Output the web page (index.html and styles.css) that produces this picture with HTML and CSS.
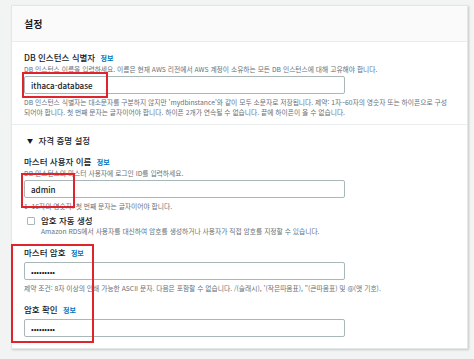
FILE: index.html
```html
<!DOCTYPE html>
<html lang="ko">
<head>
    <meta charset="UTF-8">
    <meta name="viewport" content="width=device-width, initial-scale=1.0">
    <title>설정</title>
    <link rel="stylesheet" href="styles.css">
</head>
<body>
    <div class="panel">
        <div class="panel-header">
            <h2>설정</h2>
        </div>

        <div class="section">
            <div class="field">
                <div class="label">DB 인스턴스 식별자 <a class="info">정보</a></div>
                <div class="desc">DB 인스턴스 이름을 입력하세요. 이름은 현재 AWS 리전에서 AWS 계정이 소유하는 모든 DB 인스턴스에 대해 고유해야 합니다.</div>
                <input class="text-input" type="text" value="ithaca-database" readonly>
                <div class="hint">DB 인스턴스 식별자는 대소문자를 구분하지 않지만 'mydbinstance'와 같이 모두 소문자로 저장됩니다. 제약: 1자~60자의 영숫자 또는 하이픈으로 구성<br>되어야 합니다. 첫 번째 문자는 글자이어야 합니다. 하이픈 2개가 연속될 수 없습니다. 끝에 하이픈이 올 수 없습니다.</div>
            </div>
        </div>

        <div class="section section-creds">
            <div class="expander"><span class="caret">▼</span> 자격 증명 설정</div>

            <div class="field">
                <div class="label">마스터 사용자 이름 <a class="info">정보</a></div>
                <div class="desc">DB 인스턴스의 마스터 사용자에 로그인 ID를 입력하세요.</div>
                <input class="text-input" type="text" value="admin" readonly>
                <div class="hint">1~16자의 영숫자. 첫 번째 문자는 글자이어야 합니다.</div>
            </div>

            <div class="check-row">
                <span class="checkbox"></span>
                <div>
                    <div class="check-label">암호 자동 생성</div>
                    <div class="desc">Amazon RDS에서 사용자를 대신하여 암호를 생성하거나 사용자가 직접 암호를 지정할 수 있습니다.</div>
                </div>
            </div>

            <div class="field field-pass">
                <div class="label">마스터 암호 <a class="info">정보</a></div>
                <input class="text-input pass" type="text" value="•••••••••" readonly>
                <div class="hint">제약 조건: 8자 이상의 인쇄 가능한 ASCII 문자. 다음은 포함할 수 없습니다. /(슬래시), '(작은따옴표), "(큰따옴표) 및 @(앳 기호).</div>
            </div>

            <div class="field field-confirm">
                <div class="label">암호 확인 <a class="info">정보</a></div>
                <input class="text-input pass" type="text" value="•••••••••" readonly>
            </div>
        </div>
    </div>

    <!-- annotation boxes drawn over the screenshot -->
    <div class="mark mark-id"></div>
    <div class="mark mark-user"></div>
    <div class="mark mark-pass"></div>
</body>
</html>
```

FILE: styles.css
```css
* {
    margin: 0;
    padding: 0;
    box-sizing: border-box;
}

body {
    position: relative;
    width: 474px;
    height: 359px;
    overflow: hidden;
    background: #f2f3f3;
    font-family: "Noto Sans CJK KR", "Noto Sans", sans-serif;
    color: #16191f;
    padding: 5px 6px 0 11px;
}

.panel {
    width: 457px;
    height: 344px;
    background: #ffffff;
    border: 1px solid #e4e7e7;
    box-shadow: 1px 1px 2px rgba(0, 0, 0, 0.18);
}

.panel-header {
    height: 36px;
    background: #fafafa;
    border-bottom: 1px solid #eaeded;
    padding: 0 12px;
    display: flex;
    align-items: center;
}

.panel-header h2 {
    font-size: 10px;
    font-weight: 700;
}

.section {
    padding: 9px 12px 7px;
}

.section-creds {
    border-top: 1px solid #eaeded;
    padding-top: 8px;
}

.label {
    font-size: 8.5px;
    font-weight: 500;
    line-height: 12px;
}

.info {
    color: #0073bb;
    font-size: 7px;
    font-weight: 700;
    margin-left: 3px;
}

.desc,
.hint {
    font-size: 6.75px;
    line-height: 10px;
    color: #687078;
    white-space: nowrap;
}

.text-input {
    display: block;
    width: 321px;
    height: 18px;
    margin-top: 2px;
    border: 1px solid #aab7b8;
    border-radius: 2px;
    padding: 0 6px;
    font-family: inherit;
    font-size: 8px;
    font-weight: 500;
    color: #16191f;
    background: #ffffff;
    outline: none;
}

.text-input.pass {
    font-size: 7.5px;
    letter-spacing: 0;
    margin-top: 3px;
}

.hint {
    margin-top: 3px;
}

.expander {
    font-size: 8.5px;
    font-weight: 500;
    line-height: 14px;
    color: #16191f;
}

.caret {
    font-size: 6px;
    margin: 0 3px 0 3px;
    vertical-align: 1px;
}

.section-creds .field {
    margin-top: 7px;
}

.check-row {
    display: flex;
    gap: 6px;
    margin-top: 4px;
    padding-left: 3px;
}

.checkbox {
    width: 8px;
    height: 8px;
    margin-top: 2px;
    border: 1px solid #aab7b8;
    border-radius: 1px;
    background: #ffffff;
    flex-shrink: 0;
}

.check-label {
    font-size: 8.5px;
    font-weight: 500;
    line-height: 11px;
}

.section-creds .field-pass {
    margin-top: 10px;
}

.section-creds .field-confirm {
    margin-top: 10px;
}

.mark {
    position: absolute;
    border: 2px solid #e0242c;
}

.mark-id {
    left: 22px;
    top: 72px;
    width: 86px;
    height: 26px;
}

.mark-user {
    left: 21px;
    top: 173px;
    width: 54px;
    height: 35px;
}

.mark-pass {
    left: 11px;
    top: 244px;
    width: 83px;
    height: 99px;
}
```
